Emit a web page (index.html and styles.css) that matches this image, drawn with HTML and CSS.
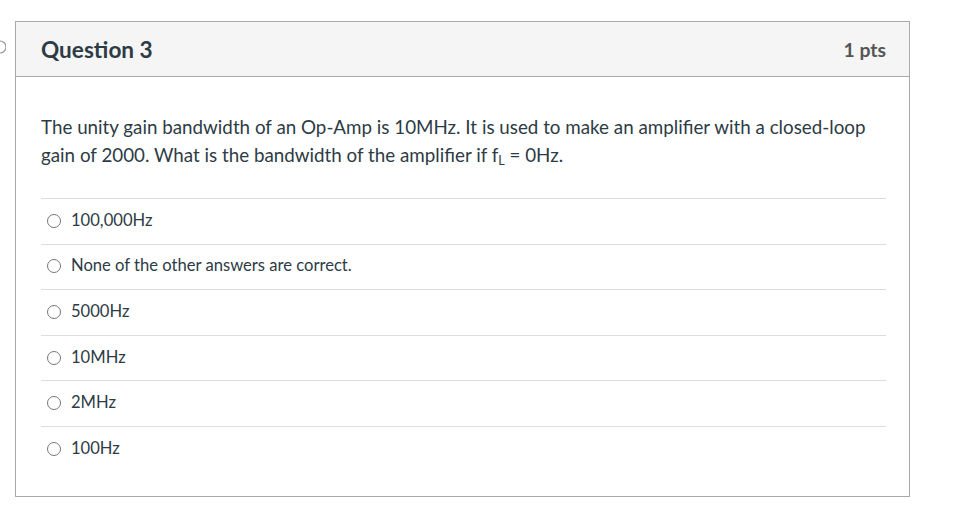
FILE: index.html
```html
<!DOCTYPE html>
<html>
<head>
<meta charset="utf-8">
<link rel="stylesheet" href="styles.css">
</head>
<body>
<div class="page">
  <svg class="nav-arc" width="6" height="14" viewBox="0 0 6 14"><path d="M0 1 A6 6 0 0 1 0 13" fill="none" stroke="#8f9ba6" stroke-width="1.2"/></svg>
  <div class="question">
    <div class="q-header">
      <h2 class="q-title">Question 3</h2>
      <div class="q-pts">1 pts</div>
    </div>
    <div class="q-body">
      <p class="q-text">The unity gain bandwidth of an Op-Amp is 10MHz. It is used to make an amplifier with a closed-loop gain of 2000. What is the bandwidth of the amplifier if f<sub>L</sub> = 0Hz.</p>
      <div class="answers">
        <label class="answer"><span class="radio"></span><span class="a-text">100,000Hz</span></label>
        <label class="answer"><span class="radio"></span><span class="a-text">None of the other answers are correct.</span></label>
        <label class="answer"><span class="radio"></span><span class="a-text">5000Hz</span></label>
        <label class="answer"><span class="radio"></span><span class="a-text">10MHz</span></label>
        <label class="answer"><span class="radio"></span><span class="a-text">2MHz</span></label>
        <label class="answer"><span class="radio"></span><span class="a-text">100Hz</span></label>
      </div>
    </div>
  </div>
</div>
</body>
</html>
```
FILE: styles.css
```css
html, body {
  margin: 0;
  padding: 0;
  background: #fff;
}
body {
  font-family: Lato, "Liberation Sans", sans-serif;
  color: #2d3b45;
}
.page {
  position: relative;
  padding: 21px 0 0 15px;
}
.nav-arc {
  position: absolute;
  left: 0;
  top: 40px;
}
.question {
  width: 893px;
  border: 1px solid #aaa;
  box-sizing: content-box;
}
.q-header {
  height: 54px;
  background: #f5f5f5;
  border-bottom: 1px solid #aaa;
  display: flex;
  align-items: center;
  justify-content: space-between;
  padding: 0 23px 0 25px;
}
.q-title {
  margin: 0;
  font-size: 22.6px;
  font-weight: 700;
  color: #2d3b45;
}
.q-pts {
  font-size: 19.4px;
  font-weight: 700;
  color: #555;
}
.q-body {
  padding: 36px 23px 24px 25px;
}
.q-text {
  margin: 0 0 29px 0;
  font-size: 18.8px;
  line-height: 28px;
  color: #2d3b45;
}
.q-text sub {
  font-size: 12.5px;
  vertical-align: -3px;
  line-height: 0;
}
.answers {
  display: flex;
  flex-direction: column;
}
.answer {
  display: flex;
  align-items: center;
  height: 45.6px;
  border-top: 1px solid #ddd;
  padding-left: 6px;
  padding-bottom: 3px;
  box-sizing: border-box;
}
.radio {
  width: 12px;
  height: 12px;
  border: 1px solid #777;
  border-radius: 50%;
  margin-right: 10px;
  flex: none;
  margin-top: 2px;
}
.a-text {
  font-size: 16.6px;
  color: #2d3b45;
}
```
